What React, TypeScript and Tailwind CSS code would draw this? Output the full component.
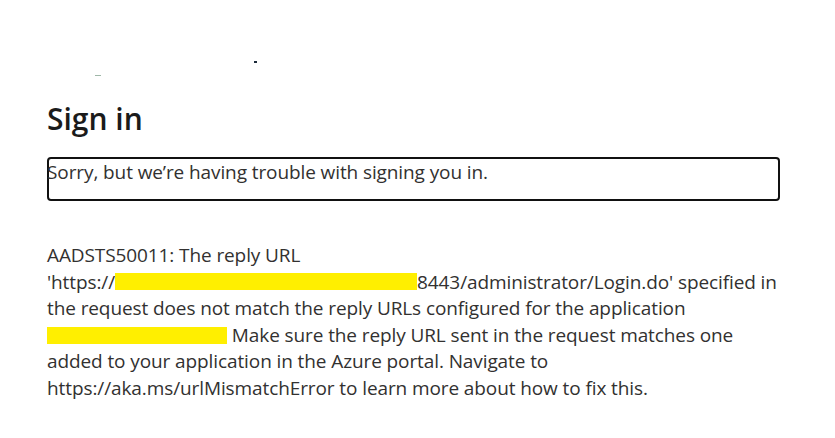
const font = { fontFamily: '"Open Sans", "Noto Sans", sans-serif' }

const lines: { pre?: string; mark?: number; text: string }[] = [
  { text: 'AADSTS50011: The reply URL' },
  { pre: "'https://", mark: 302, text: "8443/administrator/Login.do' specified in" },
  { text: 'the request does not match the reply URLs configured for the application' },
  { mark: 180, text: '\u00a0Make sure the reply URL sent in the request matches one' },
  { text: 'added to your application in the Azure portal. Navigate to' },
  { text: 'https://aka.ms/urlMismatchError to learn more about how to fix this.' },
]

export default function App() {
  return (
    <div className="relative min-h-[438px] w-[835px] bg-white" style={font}>
      {/* stray specks left over from redaction */}
      <span className="absolute left-[95px] top-[75px] h-px w-[6px] bg-[#9fb7a8]" />
      <span className="absolute left-[254px] top-[61px] h-[2px] w-[3px] bg-[#1b2a3a]" />

      <div className="w-[780px] pl-[47px] pt-[100px]">
        <h1 className="text-[30px] font-semibold leading-[37px] text-[#1b1b1b]">Sign in</h1>

        <div className="mt-[20px] h-[44px] rounded-[4px] border-2 border-[#111]">
          <p className="-ml-[2px] text-[19px] leading-[26px] tracking-[-0.1px] text-[#323130]">
            Sorry, but we’re having trouble with signing you in.
          </p>
        </div>

        <div className="mt-[41px] text-[19px] leading-[26.6px] tracking-[-0.1px] text-[#323130]">
          {lines.map((l, i) => (
            <div key={i} className="flex items-center whitespace-pre">
              {l.pre && <span>{l.pre}</span>}
              {l.mark && <span className="h-[17px] bg-[#ffef00]" style={{ width: l.mark }} />}
              <span>{l.text}</span>
            </div>
          ))}
        </div>
      </div>
    </div>
  )
}
